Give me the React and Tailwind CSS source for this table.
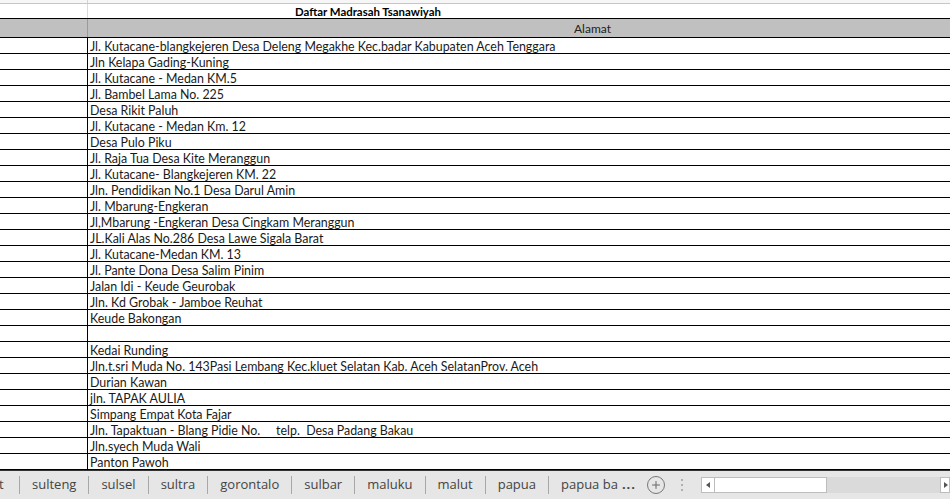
import { Plus } from "lucide-react"

const rows = [
    "Jl. Kutacane-blangkejeren Desa Deleng Megakhe Kec.badar Kabupaten Aceh Tenggara",
    "Jln Kelapa Gading-Kuning",
    "Jl. Kutacane - Medan KM.5",
    "Jl. Bambel Lama No. 225",
    "Desa Rikit Paluh",
    "Jl. Kutacane - Medan Km. 12",
    "Desa Pulo Piku",
    "Jl. Raja Tua Desa Kite Meranggun",
    "Jl. Kutacane- Blangkejeren KM. 22",
    "Jln. Pendidikan No.1 Desa Darul Amin",
    "Jl. Mbarung-Engkeran",
    "Jl,Mbarung -Engkeran Desa Cingkam Meranggun",
    "JL.Kali Alas No.286 Desa Lawe Sigala Barat",
    "Jl. Kutacane-Medan KM. 13",
    "Jl. Pante Dona Desa Salim Pinim",
    "Jalan Idi - Keude Geurobak",
    "Jln. Kd Grobak - Jamboe Reuhat",
    "Keude Bakongan",
    "",
    "Kedai Runding",
    "Jln.t.sri Muda No. 143Pasi Lembang Kec.kluet Selatan Kab. Aceh SelatanProv. Aceh",
    "Durian Kawan",
    "jln. TAPAK AULIA",
    "Simpang Empat Kota Fajar",
    "Jln. Tapaktuan - Blang Pidie No.     telp.  Desa Padang Bakau",
    "Jln.syech Muda Wali",
    "Panton Pawoh",
]

const tabs = ["sulteng", "sulsel", "sultra", "gorontalo", "sulbar", "maluku", "malut", "papua"]

export default function App() {
    return (
        <div className="w-[950px] h-[499px] overflow-hidden flex flex-col bg-white font-['Lato',sans-serif] text-[12.4px] text-[#1a1a1a]">
            {/* column header strip */}
            <div className="h-[4px] flex border-b border-[#c6c6c6] bg-[#f6f6f6]">
                <div className="w-[88px] border-r border-[#d4d4d4]" />
            </div>

            {/* title row */}
            <div className="h-[15px] flex border-b border-black">
                <div className="w-[88px] border-r border-[#dadada]" />
                <div className="flex-1 pl-[207px] font-bold text-[11.4px] leading-[15px] whitespace-pre text-black">Daftar Madrasah Tsanawiyah</div>
            </div>

            {/* header row */}
            <div className="h-[19px] flex border-b border-black bg-[#c0c0c0]">
                <div className="w-[88px] border-r border-[#9a9a9a]" />
                <div className="flex-1 pl-[486px] text-[12px] leading-[19px] text-[#222]">Alamat</div>
            </div>

            {/* data */}
            {rows.map((r, i) => (
                <div key={i} className="h-[16px] flex border-b border-black overflow-hidden">
                    <div className="w-[88px] border-r border-black" />
                    <div className="flex-1 pl-[2px] pt-[2px] leading-[13px] whitespace-pre">{r}</div>
                </div>
            ))}

            {/* sheet tabs */}
            <div className="flex-1 flex items-center bg-[#e6e6e6] border-t border-[#333] font-['Open_Sans',sans-serif] text-[13px] text-[#444]">
                <div className="flex items-center h-full">
                    <span className="w-[20px] -ml-[1px] text-left">t</span>
                    {tabs.map((t) => (
                        <div key={t} className="flex items-center">
                            <span className="w-px h-[18px] bg-[#a8a8a8]" />
                            <span className="px-[12px]">{t}</span>
                        </div>
                    ))}
                    <span className="w-px h-[18px] bg-[#a8a8a8]" />
                    <span className="pl-[12px]">papua ba</span>
                    <span className="pl-[4px] font-bold tracking-[1px]">...</span>
                </div>
                <div className="ml-[11px] w-[18px] h-[18px] rounded-full border border-[#777] flex items-center justify-center">
                    <Plus className="w-[12px] h-[12px] text-[#666]" strokeWidth={2} />
                </div>
                <div className="ml-[16px] flex flex-col gap-[3px]">
                    <span className="w-[2px] h-[2px] bg-[#b0b0b0]" />
                    <span className="w-[2px] h-[2px] bg-[#b0b0b0]" />
                    <span className="w-[2px] h-[2px] bg-[#b0b0b0]" />
                </div>
                <div className="ml-[18px] flex-1 h-[16px] flex">
                    <div className="w-[14px] h-full bg-white border border-[#bdbdbd] flex items-center justify-center">
                        <span className="w-0 h-0 border-y-[3px] border-y-transparent border-r-[4px] border-r-[#555]" />
                    </div>
                    <div className="w-[112px] h-full bg-white border-y border-r border-[#bdbdbd]" />
                    <div className="flex-1 h-full bg-[#dadada]" />
                    <div className="w-[10px] h-full bg-white border border-[#bdbdbd] flex items-center pl-[3px]">
                        <span className="w-0 h-0 border-y-[3px] border-y-transparent border-l-[4px] border-l-[#555]" />
                    </div>
                </div>
            </div>
        </div>
    )
}
